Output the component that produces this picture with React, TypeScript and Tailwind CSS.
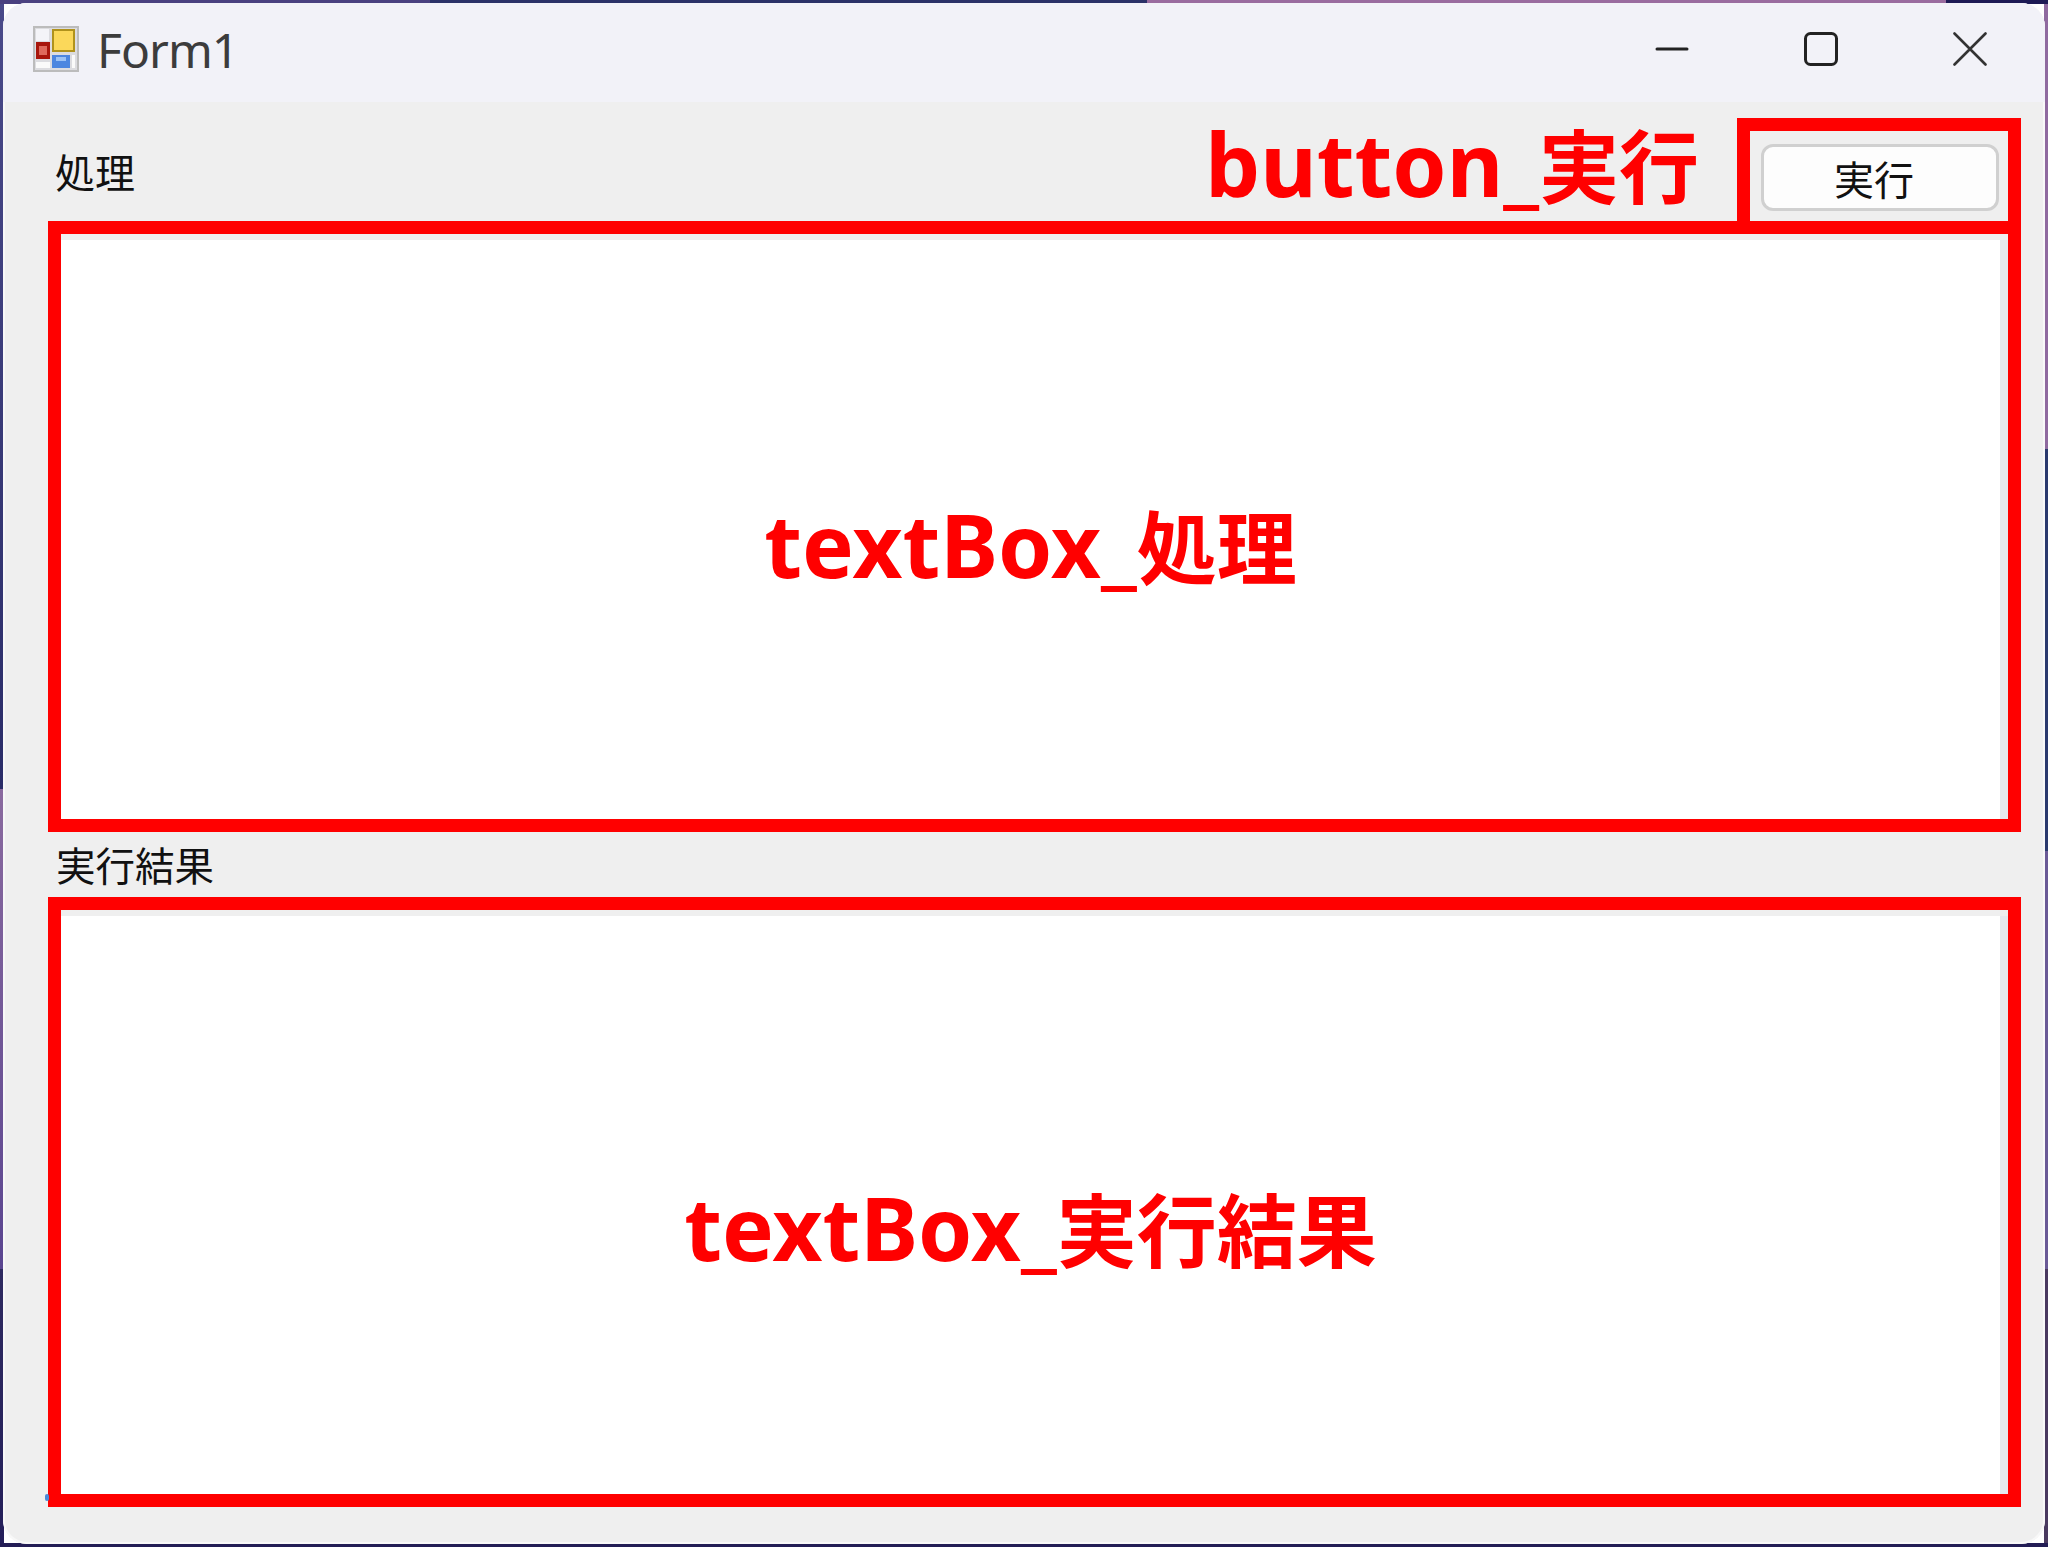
const font = "font-['Noto_Sans','Noto_Sans_CJK_JP',sans-serif]";

const wallpaper =
  "[background:linear-gradient(90deg,#4a4180_21%,#2b3268_21%,#2b3268_56%,#9a6c9f_56%,#9a6c9f_95%,#1e1b55_95%)_top/100%_4px_no-repeat,linear-gradient(#231d55,#231d55)_bottom/100%_4px_no-repeat,linear-gradient(180deg,#4a4a8a_0%,#2a2c68_51%,#8a6a9f_51%,#5a4590_82%,#2e2a60_82%,#241f5a_100%)_left/4px_100%_no-repeat,linear-gradient(180deg,#8f6a9f_0%,#8f6a9f_29%,#2b3a6e_29%,#2b3a6e_55%,#6a5a96_55%,#6a5a96_82%,#4a3a60_82%,#4a3a60_100%)_right/4px_100%_no-repeat]";

function AppIcon() {
  return (
    <svg width="46" height="46" viewBox="0 0 46 46" className="shrink-0">
      <rect x="1" y="1" width="44" height="44" fill="#dcdce0" stroke="#bcbcbc" strokeWidth="2" />
      <rect x="3" y="3" width="13" height="12" fill="#f4f4f8" />
      <rect x="19" y="3" width="23" height="23" fill="#b0921c" />
      <rect x="21" y="5" width="19" height="19" fill="#fbd85a" />
      <rect x="3" y="16" width="14" height="17" fill="#a8160c" />
      <rect x="6" y="20" width="8" height="9" fill="#de6a5c" />
      <rect x="19" y="29" width="18" height="13" fill="#4c86e0" />
      <rect x="23" y="31" width="10" height="4" fill="#9cc2f5" />
      <rect x="3" y="36" width="14" height="6" fill="#fafafa" />
      <rect x="39" y="29" width="3" height="13" fill="#fafafa" />
    </svg>
  );
}

function WindowButtons() {
  return (
    <div className="ml-auto flex items-center gap-[115px] pb-[7px]">
      <svg width="34" height="34" viewBox="0 0 34 34" fill="none" stroke="#222222" strokeWidth="3" strokeLinecap="round">
        <path d="M2 17h30" />
      </svg>
      <svg width="34" height="34" viewBox="0 0 34 34" fill="none" stroke="#222222" strokeWidth="3">
        <rect x="1.5" y="1.5" width="31" height="31" rx="5" />
      </svg>
      <svg width="34" height="34" viewBox="0 0 34 34" fill="none" stroke="#333333" strokeWidth="2.6" strokeLinecap="round">
        <path d="M1.5 1.5l31 31M32.5 1.5l-31 31" />
      </svg>
    </div>
  );
}

function RedLabel({ latin, cjk }: { latin: string; cjk: string }) {
  return (
    <span className="text-[87px] leading-none font-bold text-[#ff0000] whitespace-nowrap">
      {latin}
      <span className="text-[80px]">{cjk}</span>
    </span>
  );
}

function TextBoxFrame({ latin, cjk, h, pt }: { latin: string; cjk: string; h: string; pt: string }) {
  return (
    <div className={`${h} border-[13px] border-[#ff0000] bg-white flex flex-col`}>
      <div className="h-[6px] bg-[#efefef]" />
      <div className="flex-1 flex">
        <div className={`flex-1 flex items-center justify-center ${pt}`}>
          <RedLabel latin={latin} cjk={cjk} />
        </div>
        <div className="w-[8px] bg-[#e6e9ee]" />
      </div>
    </div>
  );
}

export default function App() {
  return (
    <div className={`w-[2048px] h-[1547px] p-[3px] overflow-hidden ${wallpaper}`}>
      <div className={`h-[1541px] rounded-[24px] bg-[#efefef] shadow-[inset_0_0_0_2px_#f8f8f8] overflow-hidden flex flex-col ${font}`}>
        <div className="h-[99px] shrink-0 bg-[#f2f2f8] flex items-center pl-[30px] pr-[58px]">
          <div className="pb-[7px] flex items-center">
            <AppIcon />
            <span className="ml-[18px] mt-[1px] text-[48px] leading-none tracking-[-0.02em] text-[#3c3c3c]">Form1</span>
          </div>
          <WindowButtons />
        </div>

        <div className="relative flex-1 flex flex-col pl-[45px] pr-[24px]">
          <div className="h-[119px] shrink-0 flex items-end">
            <span className="mb-[28px] ml-[7px] text-[40px] leading-none text-[#111111]">処理</span>
            <span className="ml-auto mb-[14px] mr-[38px]">
              <RedLabel latin="button_" cjk="実行" />
            </span>
            <div className="w-[284px] h-[103px] border-[13px] border-b-0 border-[#ff0000] pt-[13px] pl-[11px]">
              <button className="w-[238px] h-[67px] pr-[12px] pt-[4px] rounded-[12px] border-[3px] border-[#d0d0d0] bg-[#fdfdfd] text-[40px] leading-none text-[#111111]">
                実行
              </button>
            </div>
          </div>

          <TextBoxFrame latin="textBox_" cjk="処理" h="h-[611px]" pt="pt-[30px]" />

          <div className="h-[65px] shrink-0 flex items-center pl-[8px] pt-[5px] text-[39.5px] leading-none text-[#111111]">実行結果</div>

          <TextBoxFrame latin="textBox_" cjk="実行結果" h="h-[610px]" pt="pt-[44px]" />

          <div className="absolute left-[42px] top-[1392px] w-[4px] h-[7px] rounded-full bg-[#4a8ad8]" />
        </div>
      </div>
    </div>
  );
}
